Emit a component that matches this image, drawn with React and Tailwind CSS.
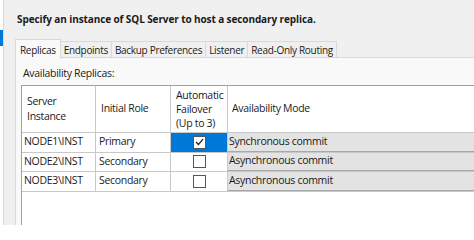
import React from "react";

const rows = [
  { inst: "NODE1\\INST", role: "Primary", fail: true, mode: "Synchronous commit" },
  { inst: "NODE2\\INST", role: "Secondary", fail: false, mode: "Asynchronous commit" },
  { inst: "NODE3\\INST", role: "Secondary", fail: false, mode: "Asynchronous commit" },
];

function Check({ checked }) {
  return (
    <div className="w-[13px] h-[13px] bg-white border border-[#555] flex items-center justify-center">
      {checked && (
        <svg width="9" height="8" viewBox="0 0 9 8">
          <path d="M1 4 L3.5 6.5 L8 1.2" fill="none" stroke="#222" strokeWidth="1.3" />
        </svg>
      )}
    </div>
  );
}

export default function App() {
  const tabs = ["Endpoints", "Backup Preferences", "Listener", "Read-Only Routing"];
  return (
    <div
      className="w-[474px] h-[225px] overflow-hidden flex bg-[#f0f0f0] text-[#1a1a1a]"
      style={{ fontFamily: '"Open Sans", "Noto Sans", sans-serif' }}
    >
      <div className="w-[4px] shrink-0 bg-white border-r border-[#d9d9d9]">
        <div className="mt-[30px] h-[16px] w-[3px] bg-[#0078d7]" />
      </div>
      <div className="flex-1 flex flex-col pl-[11px] min-w-0">
        <div className="pt-[11px] pl-[2px] h-[38px] text-[10px] tracking-[-0.1px] font-bold leading-[16px] whitespace-nowrap">
          Specify an instance of SQL Server to host a secondary replica.
        </div>
        <div className="flex items-end h-[20px] text-[10px] tracking-[-0.3px] leading-[16px] whitespace-nowrap">
          <div className="h-[20px] px-[4px] pt-[2px] bg-[#f9f9f9] border border-b-0 border-[#d9d9d9] relative z-10 -mb-px pb-px">
            Replicas
          </div>
          {tabs.map((t) => (
            <div
              key={t}
              className="h-[17px] px-[3px] border-t border-r border-b border-[#d9d9d9] bg-[#f0f0f0]"
            >
              {t}
            </div>
          ))}
          <div className="flex-1 border-b border-[#d9d9d9] h-[17px]" />
        </div>
        <div className="flex-1 bg-[#f9f9f9] border-l border-[#d9d9d9] flex flex-col pl-[5px] min-w-0">
          <div className="h-[27px] pt-[7px] pl-[2px] text-[10.5px] tracking-[-0.3px] leading-[16px] whitespace-nowrap">
            Availability Replicas:
          </div>
          <div className="flex-1 bg-white border-l border-t border-[#a0a0a0] text-[10.5px] tracking-[-0.3px] whitespace-nowrap">
            <div className="flex h-[47px] border-b border-[#c8c8c8]">
              <div className="w-[74px] border-r border-[#c8c8c8] flex flex-col justify-center pl-[5px] leading-[15px]">
                <span>Server</span>
                <span>Instance</span>
              </div>
              <div className="w-[75px] border-r border-[#c8c8c8] flex items-center pl-[5px]">
                Initial Role
              </div>
              <div className="w-[57px] border-r border-[#c8c8c8] flex flex-col justify-center pl-[5px] leading-[14px]">
                <span>Automatic</span>
                <span>Failover</span>
                <span>(Up to 3)</span>
              </div>
              <div className="flex-1 flex items-center pl-[4px]">Availability Mode</div>
            </div>
            {rows.map((r, i) => (
              <div key={i} className="flex h-[19.5px] border-b border-[#c8c8c8]">
                <div className="w-[74px] border-r border-[#c8c8c8] flex items-center pl-[2px]">
                  {r.inst}
                </div>
                <div className="w-[75px] border-r border-[#c8c8c8] flex items-center pl-[3px]">
                  {r.role}
                </div>
                <div
                  className={
                    r.fail
                      ? "w-[57px] border-r border-[#c8c8c8] flex items-center justify-center bg-[#0078d7]"
                      : "w-[57px] border-r border-[#c8c8c8] flex items-center justify-center"
                  }
                >
                  <Check checked={r.fail} />
                </div>
                <div className="flex-1 flex items-center pl-[1px] bg-[#e3e3e3] border-b border-[#a8a8a8]">
                  {r.mode}
                </div>
              </div>
            ))}
          </div>
        </div>
      </div>
    </div>
  );
}
